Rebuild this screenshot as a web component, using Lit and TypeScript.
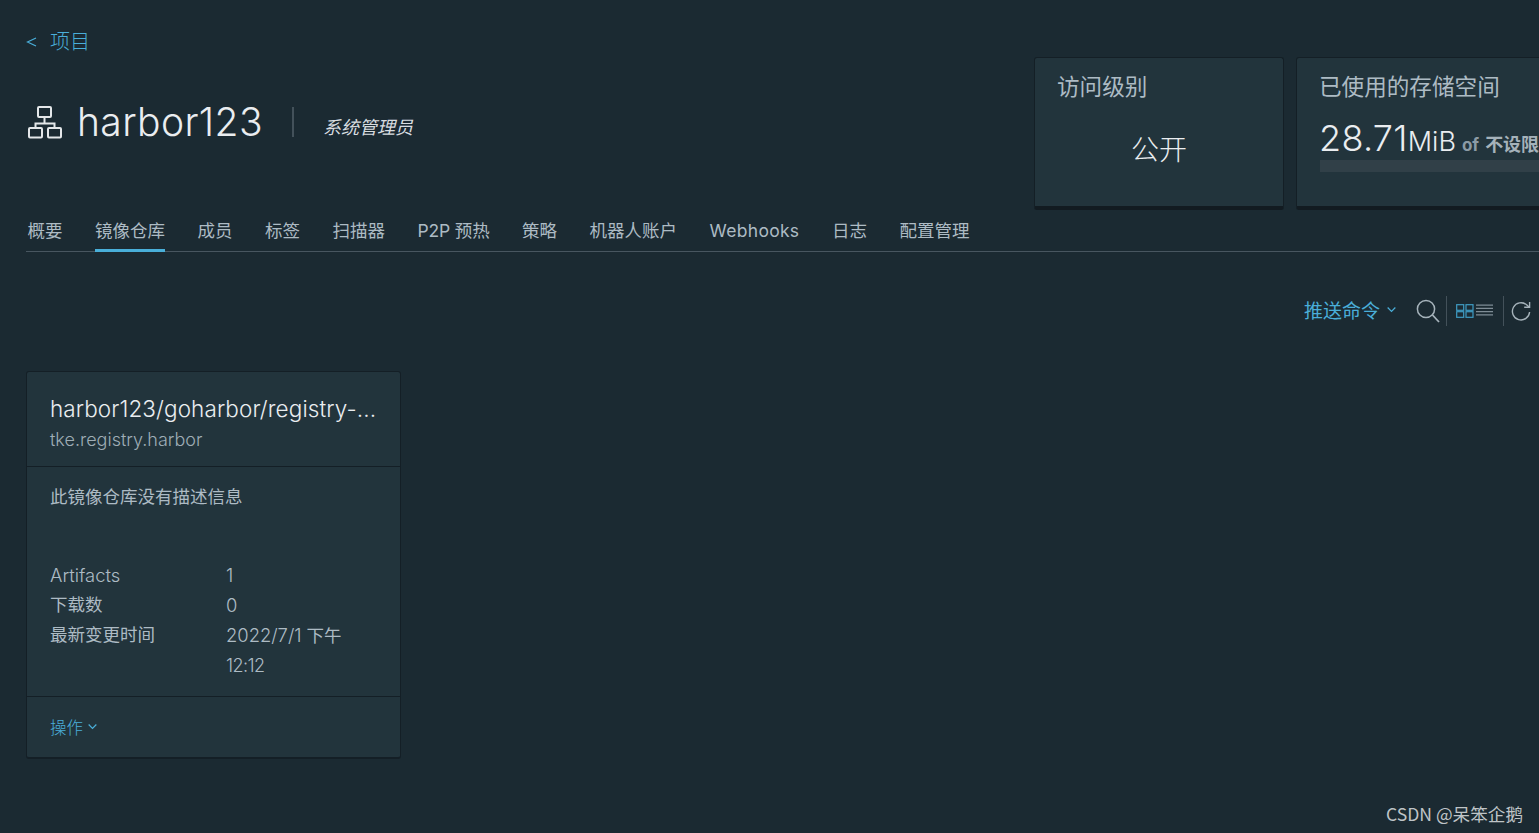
import { LitElement, html, css } from "lit";
import { customElement } from "lit/decorators.js";

const chevron = (size: number) => html`<svg class="chev" width=${size} height=${size} viewBox="0 0 10 10" fill="none" stroke="currentColor" stroke-width="1.1"><path d="M1.5 3.2 5 6.8 8.5 3.2"/></svg>`;

@customElement("app-root")
export class AppRoot extends LitElement {
  static styles = css`
    :host { display: block; height: 833px; overflow: hidden; background: #1b2a32; position: relative;
      font-family: Inter, "Noto Sans CJK SC", sans-serif; color: #adbbc4; }
    .page { padding-left: 26px; display: flex; flex-direction: column; }
    .top { display: flex; height: 210px; }
    .left { width: 1008px; flex: none; display: flex; flex-direction: column; }
    .back { display: flex; align-items: center; gap: 13px; height: 24px; margin-top: 30px; color: #4aaed9; font-size: 20px; line-height: 24px; font-weight: 300; }
    .back svg { flex: none; }
    .title { display: flex; align-items: center; margin-top: 46px; height: 44px; }
    .title svg { flex: none; }
    .name { font-size: 39px; font-weight: 300; color: #eaedf0; margin-left: 14px; line-height: 44px; letter-spacing: 0.4px; width: 215px; white-space: nowrap; }
    .sep { width: 2px; height: 30px; background: #43515a; flex: none; }
    .role { font-size: 18px; font-style: italic; font-weight: 400; color: #d8dde0; margin-left: 29px; margin-top: 8px; white-space: nowrap; }
    .cards { display: flex; gap: 12px; margin-top: 57px; height: 153px; flex: none; }
    .stat { box-sizing: border-box; width: 250px; height: 153px; flex: none; background: #22343c; border: 1px solid #141f26; border-bottom: 4px solid #121b21; border-radius: 3px; padding: 14px 23px 0; white-space: nowrap; }
    .stat h3 { margin: 0; font-size: 22.6px; font-weight: 400; line-height: 30px; color: #adbbc4; margin-left: -1px; }
    .public { text-align: center; font-size: 28px; font-weight: 300; line-height: 40px; color: #eaedf0; margin-top: 28px; }
    .usage { display: flex; align-items: baseline; margin-top: 14px; line-height: 44px; height: 44px; color: #eaedf0; font-weight: 300; margin-left: -1px; }
    .num { font-size: 36px; letter-spacing: 0.3px; }
    .unit { font-size: 27px; }
    .of { font-size: 17px; font-weight: 700; color: #8c9ba5; margin-left: 6px; }
    .limit { font-size: 18px; font-weight: 700; color: #a5b2ba; margin-left: 6px; }
    .bar { height: 12px; background: #314048; width: 300px; }
    .stat.wide { width: 300px; }
    .tabs { display: flex; gap: 32.5px; height: 42px; box-sizing: border-box; padding-left: 1.5px; border-bottom: 1px solid #485660; font-size: 17.5px; line-height: 42px; font-weight: 400; color: #adbbc4; }
    .tab { position: relative; white-space: nowrap; }
    .tab.p2p { letter-spacing: -0.15px; }
    .tab.web { letter-spacing: 0.3px; }
    .tab.active::after { content: ""; position: absolute; left: 0; right: 0; bottom: -1px; height: 3px; background: #49afd9; }
    .toolbar { display: flex; align-items: center; justify-content: flex-end; height: 36px; margin-top: 41px; color: #4aaed9; }
    .push { display: flex; align-items: center; gap: 6px; font-size: 19px; font-weight: 400; white-space: nowrap; padding-bottom: 3px; }
    .tsep { width: 1px; height: 30px; background: #43515a; flex: none; }
    .tsep.a { margin-left: 6px; margin-right: 9px; }
    .tsep.b { margin-left: 10px; margin-right: 7px; }
    .ic { flex: none; }
    .ic.search { margin-left: 19px; }
    .ic.list { margin-left: 2px; }
    .rspace { width: 8px; flex: none; }
    .card { box-sizing: border-box; width: 375px; height: 388px; margin-top: 42px; background: #22343c; border: 1px solid #141f26; border-bottom-width: 2px; border-radius: 3px; display: flex; flex-direction: column; }
    .head { height: 95px; box-sizing: border-box; padding: 23px 23px 0; border-bottom: 1px solid #141f26; flex: none; }
    .rname { font-size: 22.5px; font-weight: 300; color: #eaedf0; line-height: 28px; white-space: nowrap; letter-spacing: 0.1px; }
    .rsub { font-size: 18px; font-weight: 300; line-height: 34px; white-space: nowrap; color: #9fadb6; }
    .body { flex: 1; padding: 15px 23px 0; font-size: 17.5px; font-weight: 400; }
    .desc { line-height: 30px; white-space: nowrap; }
    .rows { display: grid; grid-template-columns: 176px 1fr; margin-top: 48px; line-height: 30px; white-space: nowrap; }
    .lat { font-size: 18.4px; font-weight: 300; }
    .time { font-size: 18px; font-weight: 300; letter-spacing: -0.6px; }
    .foot { height: 61px; box-sizing: border-box; border-top: 1px solid #141f26; padding: 0 23px 1px; display: flex; align-items: center; gap: 4px; color: #4aaed9; font-size: 16.5px; font-weight: 300; flex: none; }
    .wm { position: absolute; right: 16px; bottom: 8px; font-family: "Noto Sans CJK SC", "Noto Sans", sans-serif; font-size: 17.6px; line-height: 22px; font-weight: 400; color: #bfc4c7; white-space: nowrap; }
    .sys { stroke: #e4e7e9; }
  `;

  render() {
    const tabs = ["概要", "镜像仓库", "成员", "标签", "扫描器", "P2P 预热", "策略", "机器人账户", "Webhooks", "日志", "配置管理"];
    return html`
      <div class="page">
        <div class="top">
          <div class="left">
            <div class="back">
              <svg width="11" height="12" viewBox="0 0 11 12" fill="none" stroke="currentColor" stroke-width="1.2"><path d="M10 2 1.5 6 10 10"/></svg>
              <span>项目</span>
            </div>
            <div class="title">
              <svg class="sys" width="37" height="36" viewBox="0 0 37 36" fill="none" stroke-width="2">
                <rect x="12" y="3" width="13" height="10" rx="1"/>
                <rect x="3" y="24" width="13" height="9.5" rx="1"/>
                <rect x="22" y="24" width="13" height="9.5" rx="1"/>
                <path d="M18.5 13V19.5M9.5 24V19.5H28.5V24"/>
              </svg>
              <div class="name">harbor123</div>
              <div class="sep"></div>
              <div class="role">系统管理员</div>
            </div>
          </div>
          <div class="cards">
            <div class="stat">
              <h3>访问级别</h3>
              <div class="public">公开</div>
            </div>
            <div class="stat wide">
              <h3>已使用的存储空间</h3>
              <div class="usage"><span class="num">28.71</span><span class="unit">MiB</span><span class="of">of</span><span class="limit">不设限</span></div>
              <div class="bar"></div>
            </div>
          </div>
        </div>
        <div class="tabs">
          ${tabs.map((t) => html`<div class="tab ${t === "镜像仓库" ? "active" : ""} ${t.startsWith("P2P") ? "p2p" : ""} ${t === "Webhooks" ? "web" : ""}">${t}</div>`)}
        </div>
        <div class="toolbar">
          <div class="push">推送命令${chevron(11)}</div>
          <svg class="ic search" width="24" height="26" viewBox="0 0 24 26" fill="none" stroke="#a6b3bb" stroke-width="1.5"><circle cx="10" cy="11" r="8.6"/><path d="M16.5 17 23 24" stroke-width="1.8"/></svg>
          <div class="tsep a"></div>
          <svg class="ic" width="18" height="14" viewBox="0 0 18 14" fill="none" stroke="#3f9cc4" stroke-width="1.2"><rect x=".7" y=".7" width="7" height="5.6"/><rect x="10" y=".7" width="7" height="5.6"/><rect x=".7" y="7.7" width="7" height="5.6"/><rect x="10" y="7.7" width="7" height="5.6"/></svg>
          <svg class="ic list" width="17" height="14" viewBox="0 0 17 14" fill="none" stroke="#7e8c95" stroke-width="1.3"><path d="M0 1.2H17M0 4.4H17M0 7.6H17M0 10.8H17"/></svg>
          <div class="tsep b"></div>
          <svg class="ic" width="20" height="20" viewBox="0 0 20 20" fill="none" stroke="#a6b3bb" stroke-width="1.4"><path d="M18.6 11a8.6 8.6 0 1 1-3-7.2L18 6"/><path d="M18.6 1v5.2h-5.4"/></svg>
          <div class="rspace"></div>
        </div>
        <div class="card">
          <div class="head">
            <div class="rname">harbor123/goharbor/registry-...</div>
            <div class="rsub">tke.registry.harbor</div>
          </div>
          <div class="body">
            <div class="desc">此镜像仓库没有描述信息</div>
            <div class="rows">
              <div class="lat">Artifacts</div><div class="lat">1</div>
              <div>下载数</div><div class="lat">0</div>
              <div>最新变更时间</div><div><span class="lat">2022/7/1</span> 下午<br /><span class="time">12:12</span></div>
            </div>
          </div>
          <div class="foot">操作${chevron(11)}</div>
        </div>
      </div>
      <div class="wm">CSDN @呆笨企鹅</div>
    `;
  }
}
